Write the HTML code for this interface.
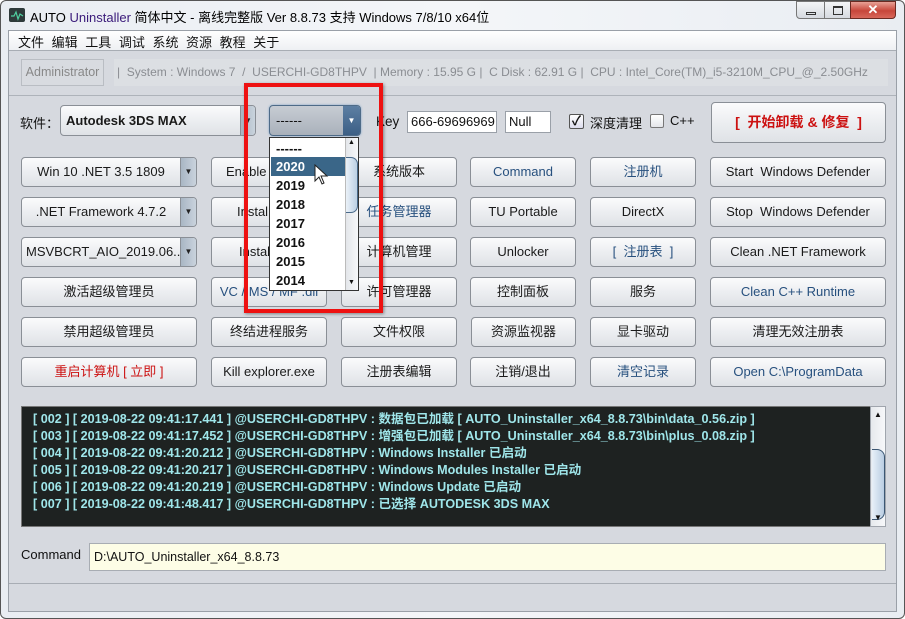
<!DOCTYPE html>
<html><head><meta charset="utf-8"><style>
*{box-sizing:border-box;margin:0;padding:0}
body{width:905px;height:619px;position:relative;overflow:hidden;background:#fff;font-family:"Liberation Sans","Noto Sans CJK SC",sans-serif;font-size:13px;color:#111}
.a{position:absolute}
.win{left:0;top:0;width:905px;height:619px;border:1px solid #555;border-radius:6px;background:linear-gradient(90deg,#e9edf2,#f4f6f9 50%,#e9edf2)}
.btn{position:absolute;height:30px;border:1px solid #8a8f96;border-radius:4px;background:linear-gradient(#fbfbfc,#eceef1 50%,#dfe2e6);text-align:center;line-height:28px;font-size:13px;color:#1a1a1a;white-space:nowrap;overflow:hidden}
.blue{color:#27507e}
.red{color:#cc1111}
.arr{position:absolute;right:0;top:0;width:16px;height:28px;background:linear-gradient(90deg,#a9b6c4,#c9d3dd);border-left:1px solid #8a8f96;font-size:8px;line-height:28px;text-align:center;color:#222}
.log{font-family:"Liberation Sans","Noto Sans CJK SC",sans-serif;font-weight:bold;color:#9fe6ea;font-size:12.6px;left:33px;white-space:nowrap}
.it{position:absolute;left:1px;width:74px;height:19px;font-weight:bold;font-size:13px;line-height:19px;padding-left:5px;color:#111}
</style></head><body>
<div class="a win"></div>
<div class="a" style="left:9px;top:8px;width:16px;height:14px;background:#2e3a3a;border-radius:2px"><svg width="16" height="14"><polyline points="2,8 5,8 7,4 9,11 11,6 14,8" fill="none" stroke="#4fd0a0" stroke-width="1.2"/></svg></div>
<div class="a" style="left:30px;top:7px;font-size:13px;color:#000;white-space:nowrap">AUTO <span style="color:#3a1a7a">Uninstaller</span> 简体中文 - 离线完整版 Ver 8.8.73 支持 Windows 7/8/10 x64位</div>
<div class="a" style="left:796px;top:1px;width:29px;height:18px;border:1px solid #777;border-radius:0 0 0 4px;background:linear-gradient(#f4f5f7,#d6dae0)"><div class="a" style="left:9px;top:10px;width:10px;height:3px;border:1px solid #333"></div></div>
<div class="a" style="left:824px;top:1px;width:27px;height:18px;border:1px solid #777;background:linear-gradient(#f4f5f7,#d6dae0)"><div class="a" style="left:8px;top:4px;width:10px;height:9px;border:1px solid #333;border-top-width:2px"></div></div>
<div class="a" style="left:850px;top:1px;width:46px;height:18px;border:1px solid #6b2a22;border-radius:0 0 4px 0;background:linear-gradient(#e8a196,#c7463a 55%,#d8675a);color:#fff;text-align:center;font-weight:bold;font-size:13px;line-height:16px">✕</div>
<div class="a" style="left:8px;top:30px;width:889px;height:582px;background:#d6d9df;border:1px solid #9aa0a8"></div>
<div class="a" style="left:9px;top:31px;width:887px;height:20px;background:linear-gradient(#fff,#eef0f3);border-bottom:1px solid #a8adb4"></div>
<div class="a" style="left:18px;top:32px;font-size:13px;word-spacing:4px">文件 编辑 工具 调试 系统 资源 教程 关于</div>
<div class="a" style="left:21px;top:59px;width:83px;height:27px;border:1px solid #b9bdc3;background:#d8dbe0;color:#888;line-height:25px;text-align:center;font-size:12.5px">Administrator</div>
<div class="a" style="left:114px;top:59px;width:774px;height:27px;background:#dcdfe3;color:#8a8d92;line-height:27px;font-size:12px;padding-left:3px;white-space:nowrap;overflow:hidden">|&nbsp; System : Windows 7 &nbsp;/&nbsp; USERCHI-GD8THPV &nbsp;| Memory : 15.95 G | &nbsp;C Disk : 62.91 G | &nbsp;CPU : Intel_Core(TM)_i5-3210M_CPU_@_2.50GHz</div>
<div class="a" style="left:9px;top:95px;width:887px;height:1px;background:#aeb3ba"></div>
<div class="a" style="left:20px;top:113px;font-size:13px">软件：</div>
<div class="a btn" style="left:60px;top:105px;width:196px;height:31px;text-align:left;padding-left:5px;font-weight:bold;line-height:29px">Autodesk 3DS MAX<div class="arr" style="height:29px;width:15px;line-height:29px">▼</div></div>
<div class="a" style="left:269px;top:105px;width:92px;height:31px;border:1px solid #4e6b88;border-radius:4px;background:linear-gradient(#c7ccd3,#a9b1bb);box-shadow:0 0 2px #7fa3c8;padding-left:6px;line-height:30px">------<div class="a" style="right:0;top:0;width:17px;height:29px;background:linear-gradient(#5d7fa3,#3c5f85);color:#fff;font-size:8px;text-align:center;line-height:29px;border-radius:0 3px 3px 0">▼</div></div>
<div class="a" style="left:376px;top:114px;font-size:13.5px">Key</div>
<div class="a" style="left:407px;top:111px;width:90px;height:22px;border:1px solid #9aa0a8;background:#fff;line-height:20px;padding-left:3px">666-69696969</div>
<div class="a" style="left:505px;top:111px;width:46px;height:22px;border:1px solid #9aa0a8;background:#fff;line-height:20px;padding-left:3px">Null</div>
<div class="a" style="left:569px;top:114px;width:15px;height:15px;border:1px solid #555;border-radius:2px;background:linear-gradient(#fff,#dde);font-size:13px;line-height:12px;text-align:center;font-weight:bold">✓</div>
<div class="a" style="left:590px;top:113px">深度清理</div>
<div class="a" style="left:650px;top:114px;width:14px;height:14px;border:1px solid #777;border-radius:2px;background:linear-gradient(#fff,#e4e6ea)"></div>
<div class="a" style="left:670px;top:113px">C++</div>
<div class="a btn" style="left:711px;top:102px;width:175px;height:41px;line-height:39px;color:#cc1111;font-weight:bold;font-size:14px">[&nbsp; 开始卸载 &amp; 修复 &nbsp;]</div>
<div class="btn" style="left:21px;top:157px;width:176px;padding-right:16px">Win 10 .NET 3.5 1809<div class="arr">▼</div></div>
<div class="btn" style="left:21px;top:197px;width:176px;padding-right:16px">.NET Framework 4.7.2<div class="arr">▼</div></div>
<div class="btn" style="left:21px;top:237px;width:176px;padding-right:16px;text-align:left;padding-left:4px">MSVBCRT_AIO_2019.06....<div class="arr">▼</div></div>
<div class="btn" style="left:21px;top:277px;width:176px">激活超级管理员</div>
<div class="btn" style="left:21px;top:317px;width:176px">禁用超级管理员</div>
<div class="btn red" style="left:21px;top:357px;width:176px">重启计算机 [ 立即 ]</div>
<div class="btn" style="left:211px;top:157px;width:116px;text-align:left;padding-left:14px">Enable .</div>
<div class="btn" style="left:211px;top:197px;width:116px;text-align:left;padding-left:25px">Install</div>
<div class="btn" style="left:211px;top:237px;width:116px;text-align:left;padding-left:27px">Instal</div>
<div class="btn blue" style="left:211px;top:277px;width:116px">VC / MS / MF .dll</div>
<div class="btn" style="left:211px;top:317px;width:116px">终结进程服务</div>
<div class="btn" style="left:211px;top:357px;width:116px">Kill explorer.exe</div>
<div class="btn" style="left:341px;top:157px;width:116px">系统版本</div>
<div class="btn blue" style="left:341px;top:197px;width:116px">任务管理器</div>
<div class="btn" style="left:341px;top:237px;width:116px">计算机管理</div>
<div class="btn" style="left:341px;top:277px;width:116px">许可管理器</div>
<div class="btn" style="left:341px;top:317px;width:116px">文件权限</div>
<div class="btn" style="left:341px;top:357px;width:116px">注册表编辑</div>
<div class="btn blue" style="left:470px;top:157px;width:106px">Command</div>
<div class="btn" style="left:470px;top:197px;width:106px">TU Portable</div>
<div class="btn" style="left:470px;top:237px;width:106px">Unlocker</div>
<div class="btn" style="left:470px;top:277px;width:106px">控制面板</div>
<div class="btn" style="left:471px;top:317px;width:105px">资源监视器</div>
<div class="btn" style="left:470px;top:357px;width:106px">注销/退出</div>
<div class="btn blue" style="left:590px;top:157px;width:106px">注册机</div>
<div class="btn" style="left:590px;top:197px;width:106px">DirectX</div>
<div class="btn blue" style="left:590px;top:237px;width:106px">[&nbsp; 注册表 &nbsp;]</div>
<div class="btn" style="left:590px;top:277px;width:106px">服务</div>
<div class="btn" style="left:590px;top:317px;width:106px">显卡驱动</div>
<div class="btn blue" style="left:590px;top:357px;width:106px">清空记录</div>
<div class="btn" style="left:710px;top:157px;width:176px">Start&nbsp; Windows Defender</div>
<div class="btn" style="left:710px;top:197px;width:176px">Stop&nbsp; Windows Defender</div>
<div class="btn" style="left:710px;top:237px;width:176px">Clean .NET Framework</div>
<div class="btn blue" style="left:710px;top:277px;width:176px">Clean C++ Runtime</div>
<div class="btn" style="left:710px;top:317px;width:176px">清理无效注册表</div>
<div class="btn blue" style="left:710px;top:357px;width:176px">Open C:\ProgramData</div>
<div class="a" style="left:21px;top:406px;width:850px;height:121px;background:#1e2221;border:1px solid #777"></div>
<div class="a" style="left:870px;top:406px;width:16px;height:121px;background:linear-gradient(90deg,#e6e9ed,#f7f8fa);border:1px solid #a0a5ad"><div class="a" style="left:1px;top:42px;width:13px;height:71px;border:1px solid #3b5672;border-left:none;border-radius:0 8px 8px 0;background:linear-gradient(90deg,#e8f0f8,#b9cde2)"></div><div class="a" style="left:3px;top:3px;font-size:8px">▲</div><div class="a" style="left:3px;top:106px;font-size:8px">▼</div></div>
<div class="a log" style="top:408px">[ 002 ] [ 2019-08-22 09:41:17.441 ] @USERCHI-GD8THPV : 数据包已加载 [ AUTO_Uninstaller_x64_8.8.73\bin\data_0.56.zip ]</div>
<div class="a log" style="top:425px">[ 003 ] [ 2019-08-22 09:41:17.452 ] @USERCHI-GD8THPV : 增强包已加载 [ AUTO_Uninstaller_x64_8.8.73\bin\plus_0.08.zip ]</div>
<div class="a log" style="top:442px">[ 004 ] [ 2019-08-22 09:41:20.212 ] @USERCHI-GD8THPV : Windows Installer 已启动</div>
<div class="a log" style="top:459px">[ 005 ] [ 2019-08-22 09:41:20.217 ] @USERCHI-GD8THPV : Windows Modules Installer 已启动</div>
<div class="a log" style="top:476px">[ 006 ] [ 2019-08-22 09:41:20.219 ] @USERCHI-GD8THPV : Windows Update 已启动</div>
<div class="a log" style="top:493px">[ 007 ] [ 2019-08-22 09:41:48.417 ] @USERCHI-GD8THPV : 已选择 AUTODESK 3DS MAX</div>
<div class="a" style="left:21px;top:547px;font-size:13px">Command</div>
<div class="a" style="left:89px;top:543px;width:797px;height:28px;background:#fdfde6;border:1px solid #a8adb3;line-height:26px;padding-left:4px;font-size:12.5px">D:\AUTO_Uninstaller_x64_8.8.73</div>
<div class="a" style="left:9px;top:583px;width:887px;height:1px;background:#a8adb4"></div>
<div class="a" style="left:269px;top:137px;width:90px;height:154px;background:#fff;border:1px solid #333">
<div class="it" style="top:1px">------</div>
<div class="it" style="top:19px;background:#3a6688;color:#fff">2020</div>
<div class="it" style="top:38px">2019</div>
<div class="it" style="top:57px">2018</div>
<div class="it" style="top:76px">2017</div>
<div class="it" style="top:95px">2016</div>
<div class="it" style="top:114px">2015</div>
<div class="it" style="top:133px">2014</div>
<div class="a" style="left:75px;top:0;width:13px;height:152px;background:linear-gradient(90deg,#e3e6ea,#f7f8fa);border-left:1px solid #bbb"><div class="a" style="left:0;top:19px;width:12px;height:56px;border:1px solid #4a6a8a;border-left:none;border-radius:0 7px 7px 0;background:linear-gradient(90deg,#eaf1f8,#bcd0e3)"></div><div class="a" style="left:2px;top:1px;font-size:7px">▲</div><div class="a" style="left:2px;top:141px;font-size:7px">▼</div></div>
</div>
<svg class="a" style="left:314px;top:164px" width="16" height="22"><path d="M1 1 L1 17 L5 13 L8 20 L10 19 L7 12 L13 12 Z" fill="#fff" stroke="#222" stroke-width="1"/></svg>
<div class="a" style="left:244px;top:83px;width:139px;height:230px;border:4px solid #ee1111;box-shadow:1px 1px 3px rgba(0,0,0,.4)"></div>
</body></html>
